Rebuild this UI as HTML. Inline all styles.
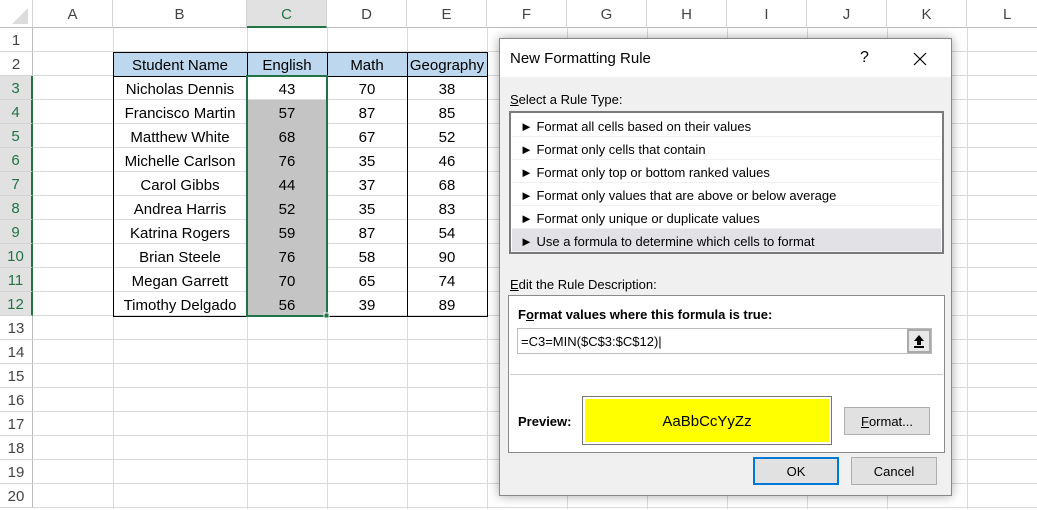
<!DOCTYPE html><html><head><style>
body{margin:0;width:1037px;height:509px;overflow:hidden;background:#fff;font-family:"Liberation Sans",sans-serif;position:relative}
.a{position:absolute;box-sizing:border-box}
.ch{position:absolute;top:0;height:28px;line-height:30px;text-align:center;font-size:15px;color:#444;background:#fff;border-right:1px solid #d4d4d4;border-bottom:1px solid #bbb;box-sizing:border-box}
.rh{position:absolute;left:0;width:33px;height:24px;line-height:26px;text-align:center;font-size:15px;color:#444;border-bottom:1px solid #d4d4d4;border-right:1px solid #bbb;box-sizing:border-box;background:#fff}
.c{position:absolute;height:24px;line-height:27px;text-align:center;font-size:15px;color:#000;box-sizing:border-box}
.it{position:absolute;left:1px;right:1px;height:23px;line-height:25px;font-size:13px;padding-left:8px;border-bottom:1px solid #f0f0f0;box-sizing:border-box}
.dt{font-size:13px;color:#000}
</style></head><body>
<svg class="a" style="left:0;top:0" width="1037" height="509">
<g stroke="#dadada" stroke-width="1" id="gl">
<line x1="113.5" y1="28" x2="113.5" y2="509"/><line x1="247.5" y1="28" x2="247.5" y2="509"/><line x1="327.5" y1="28" x2="327.5" y2="509"/><line x1="407.5" y1="28" x2="407.5" y2="509"/><line x1="487.5" y1="28" x2="487.5" y2="509"/><line x1="567.5" y1="28" x2="567.5" y2="509"/><line x1="647.5" y1="28" x2="647.5" y2="509"/><line x1="727.5" y1="28" x2="727.5" y2="509"/><line x1="807.5" y1="28" x2="807.5" y2="509"/><line x1="887.5" y1="28" x2="887.5" y2="509"/><line x1="967.5" y1="28" x2="967.5" y2="509"/>
</g></svg>
<script>
var s="";for(var i=1;i<=20;i++){var y=28+i*24-0.5;s+='<line x1="33" y1="'+y+'" x2="1037" y2="'+y+'"/>';}
document.getElementById("gl").innerHTML+=s;
</script>
<div class="ch" style="left:0;width:33px;background:#fff"><svg width="33" height="28"><polygon points="28,8 28,24 12,24" fill="#dcdcdc"/></svg></div>
<div class="ch" style="left:33px;width:80px">A</div><div class="ch" style="left:113px;width:134px">B</div>
<div class="ch" style="left:247px;width:80px;background:#e1e1e1;color:#217346;border-bottom:2px solid #217346">C</div>
<div class="ch" style="left:327px;width:80px">D</div><div class="ch" style="left:407px;width:80px">E</div><div class="ch" style="left:487px;width:80px">F</div><div class="ch" style="left:567px;width:80px">G</div><div class="ch" style="left:647px;width:80px">H</div><div class="ch" style="left:727px;width:80px">I</div><div class="ch" style="left:807px;width:80px">J</div><div class="ch" style="left:887px;width:80px">K</div><div class="ch" style="left:967px;width:70px;border-right:0;padding-left:36px;text-align:left">L</div>
<div class="rh" style="top:28px">1</div><div class="rh" style="top:52px">2</div>
<div class="rh" style="top:76px;background:#e1e1e1;color:#217346;border-right:2px solid #217346">3</div>
<div class="rh" style="top:100px;background:#e1e1e1;color:#217346;border-right:2px solid #217346">4</div>
<div class="rh" style="top:124px;background:#e1e1e1;color:#217346;border-right:2px solid #217346">5</div>
<div class="rh" style="top:148px;background:#e1e1e1;color:#217346;border-right:2px solid #217346">6</div>
<div class="rh" style="top:172px;background:#e1e1e1;color:#217346;border-right:2px solid #217346">7</div>
<div class="rh" style="top:196px;background:#e1e1e1;color:#217346;border-right:2px solid #217346">8</div>
<div class="rh" style="top:220px;background:#e1e1e1;color:#217346;border-right:2px solid #217346">9</div>
<div class="rh" style="top:244px;background:#e1e1e1;color:#217346;border-right:2px solid #217346">10</div>
<div class="rh" style="top:268px;background:#e1e1e1;color:#217346;border-right:2px solid #217346">11</div>
<div class="rh" style="top:292px;background:#e1e1e1;color:#217346;border-right:2px solid #217346">12</div>
<div class="rh" style="top:316px">13</div><div class="rh" style="top:340px">14</div><div class="rh" style="top:364px">15</div><div class="rh" style="top:388px">16</div><div class="rh" style="top:412px">17</div><div class="rh" style="top:436px">18</div><div class="rh" style="top:460px">19</div><div class="rh" style="top:484px">20</div>
<div class="a" style="left:113px;top:52px;width:375px;height:24px;background:#bdd7ee"></div>
<div class="a" style="left:248px;top:100px;width:79px;height:216px;background:#c4c4c4"></div>
<svg class="a" style="left:0;top:0" width="1037" height="509"><g stroke="#000" stroke-width="1">
<rect x="113.5" y="52.5" width="374" height="264" fill="none"/>
<line x1="247.5" y1="52" x2="247.5" y2="317"/><line x1="327.5" y1="52" x2="327.5" y2="317"/><line x1="407.5" y1="52" x2="407.5" y2="317"/><line x1="113" y1="76.5" x2="488" y2="76.5"/>
</g><rect x="247" y="76" width="80" height="240" fill="none" stroke="#217346" stroke-width="2"/><rect x="324" y="313" width="5" height="5" fill="#217346" stroke="#fff"/></svg>
<div id="t"></div>
<script>
var d=[["Student Name","English","Math","Geography"],["Nicholas Dennis",43,70,38],["Francisco Martin",57,87,85],["Matthew White",68,67,52],["Michelle Carlson",76,35,46],["Carol Gibbs",44,37,68],["Andrea Harris",52,35,83],["Katrina Rogers",59,87,54],["Brian Steele",76,58,90],["Megan Garrett",70,65,74],["Timothy Delgado",56,39,89]];
var x=[113,247,327,407],w=[134,80,80,80],h="";
d.forEach(function(r,i){r.forEach(function(v,j){h+='<div class="c" style="left:'+x[j]+'px;top:'+(52+i*24)+'px;width:'+w[j]+'px">'+v+'</div>'})});
document.getElementById("t").innerHTML=h;
</script>
<div class="a" style="left:499px;top:38px;width:453px;height:458px;background:#f0f0f0;border:1px solid #888;box-shadow:0 0 10px rgba(0,0,0,.35)">
<div class="a" style="left:0;top:0;width:451px;height:38px;background:#fff"></div>
<div class="a" style="left:10px;top:11px;font-size:15px">New Formatting Rule</div>
<div class="a" style="left:360px;top:10px;font-size:16px">?</div>
<svg class="a" style="left:413px;top:13px" width="14" height="14"><path d="M1 1L13 13M13 1L1 13" stroke="#000" stroke-width="1.2"/></svg>
<div class="a dt" style="left:10px;top:53px"><u>S</u>elect a Rule Type:</div>
<div class="a" style="left:9px;top:72px;width:435px;height:143px;background:#fff;border:2px solid #7a7a7a">
<div class="it" style="top:1px">► Format all cells based on their values</div>
<div class="it" style="top:24px">► Format only cells that contain</div>
<div class="it" style="top:47px">► Format only top or bottom ranked values</div>
<div class="it" style="top:70px">► Format only values that are above or below average</div>
<div class="it" style="top:93px">► Format only unique or duplicate values</div>
<div class="it" style="top:116px;background:#e2e2e6">► Use a formula to determine which cells to format</div>
</div>
<div class="a dt" style="left:10px;top:238px"><u>E</u>dit the Rule Description:</div>
<div class="a" style="left:8px;top:256px;width:437px;height:158px;background:#fff;border:1px solid #8a8a8a">
<div class="a dt" style="left:9px;top:11px;font-weight:bold">F<u>o</u>rmat values where this formula is true:</div>
<div class="a" style="left:8px;top:32px;width:415px;height:26px;border:1px solid #bbb;font-size:13px;line-height:26px;padding-left:3px">=C3=MIN($C$3:$C$12)|</div>
<div class="a" style="left:398px;top:33px;width:24px;height:24px;background:#e8e8e8;border:2px solid #aaa"><svg width="20" height="20"><path d="M10 4L5 10H8V14H12V10H15Z" fill="#000"/><rect x="5" y="15" width="10" height="2" fill="#000"/></svg></div>
<div class="a" style="left:1px;top:78px;width:433px;height:1px;background:#ccc"></div>
<div class="a dt" style="left:9px;top:118px;font-weight:bold">Preview:</div>
<div class="a" style="left:73px;top:100px;width:250px;height:49px;border:1px solid #777;padding:2px"><div style="background:#ff0;height:43px;line-height:45px;text-align:center;font-size:15px">AaBbCcYyZz</div></div>
<div class="a dt" style="left:335px;top:111px;width:86px;height:28px;background:#e1e1e1;border:1px solid #adadad;text-align:center;line-height:28px"><u>F</u>ormat...</div>
</div>
<div class="a dt" style="left:253px;top:418px;width:86px;height:28px;background:#e1e1e1;border:2px solid #0078d7;text-align:center;line-height:26px">OK</div>
<div class="a dt" style="left:351px;top:418px;width:86px;height:28px;background:#e1e1e1;border:1px solid #adadad;text-align:center;line-height:28px">Cancel</div>
</div>
</body></html>
